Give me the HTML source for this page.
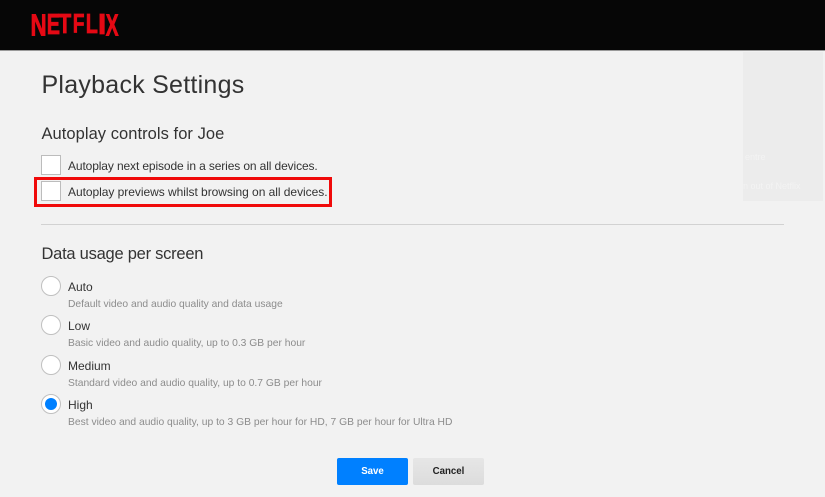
<!DOCTYPE html>
<html><head><meta charset="utf-8"><style>
html,body{margin:0;padding:0}
body{width:825px;height:497px;overflow:hidden;background:#f2f2f2;position:relative;font-family:"Liberation Sans",sans-serif;color:#333}
.a{position:absolute;white-space:nowrap}
.t{filter:blur(.25px)}
.cb{position:absolute;left:41px;width:18px;height:18px;background:#fff;border:1px solid #bcbcbc}
.r{position:absolute;left:41px;width:18px;height:18px;border-radius:50%;background:#fff;border:1px solid #c0c0c0}
.l{left:68px;font-size:12px;line-height:16px;color:#333}
.s{left:68px;font-size:10.3px;line-height:14px;color:#8c8c8c}
.h{left:42px;font-size:16.5px;line-height:20px;color:#333}
</style></head><body>
<div class="a" style="left:0;top:0;width:825px;height:50px;background:#060606"></div>
<div class="a" style="left:0;top:50px;width:825px;height:1px;background:#9a9a9a"></div>
<svg class="a" style="left:0;top:0" width="130" height="50">
<g fill="#e50914" stroke="#e50914" stroke-width=".9" font-family="Liberation Sans" font-weight="700" font-size="31">
<text transform="translate(30.5,35.5) scale(.72,1)">N</text>
<text transform="translate(46.7,33.8) scale(.64,.93)">E</text>
<text transform="translate(58.4,32.8) scale(.68,.89)">T</text>
<text transform="translate(72.7,32.3) scale(.62,.86)">F</text>
<text transform="translate(85.7,32.8) scale(.64,.89)">L</text>
<text transform="translate(98,33.8) scale(.95,.93)">I</text>
<text transform="translate(105.8,35.5) scale(.62,1)">X</text>
</g></svg>
<div class="a" style="left:743px;top:52px;width:80px;height:149px;background:#ececec"></div>
<div class="a" style="left:745px;top:152px;font-size:9px;color:#f3f3f3">entre</div>
<div class="a" style="left:743px;top:181px;font-size:9px;color:#f3f3f3">n out of Netflix</div>

<div class="a t" style="left:41.5px;top:70px;font-size:25px;line-height:30px;color:#333;letter-spacing:.25px">Playback Settings</div>
<div class="a h t" style="left:41.5px;top:124px;letter-spacing:.05px">Autoplay controls for Joe</div>

<div class="cb" style="top:155px"></div>
<div class="a l t" style="top:158px;letter-spacing:-.12px">Autoplay next episode in a series on all devices.</div>
<div class="cb" style="top:181px"></div>
<div class="a l t" style="top:184px;letter-spacing:-.04px">Autoplay previews whilst browsing on all devices.</div>
<div class="a" style="left:34px;top:177px;width:292px;height:24px;border:3px solid #f00a0a"></div>

<div class="a" style="left:41px;top:224px;width:743px;height:1px;background:#d2d2d2"></div>

<div class="a h t" style="left:41.5px;top:244px;letter-spacing:-.25px">Data usage per screen</div>

<div class="r" style="top:276px"></div>
<div class="a l t" style="top:279px">Auto</div>
<div class="a s t" style="top:298px">Default video and audio quality and data usage</div>

<div class="r" style="top:315px"></div>
<div class="a l t" style="top:318px">Low</div>
<div class="a s t" style="top:337px">Basic video and audio quality, up to 0.3 GB per hour</div>

<div class="r" style="top:355px"></div>
<div class="a l t" style="top:358px">Medium</div>
<div class="a s t" style="top:377px">Standard video and audio quality, up to 0.7 GB per hour</div>

<div class="r" style="top:394px"></div>
<div class="a" style="left:45px;top:398px;width:12px;height:12px;border-radius:50%;background:#0080ff"></div>
<div class="a l t" style="top:397px">High</div>
<div class="a s t" style="top:416px">Best video and audio quality, up to 3 GB per hour for HD, 7 GB per hour for Ultra HD</div>

<div class="a t" style="left:337px;top:458px;width:71px;height:27px;background:#0080ff;border-radius:2px;color:#fff;font-size:9.7px;font-weight:700;line-height:27px;text-align:center">Save</div>
<div class="a t" style="left:413px;top:458px;width:71px;height:27px;background:linear-gradient(#e6e6e6,#dcdcdc);border-radius:2px;color:#222;font-size:9.7px;font-weight:700;line-height:27px;text-align:center">Cancel</div>
</body></html>
